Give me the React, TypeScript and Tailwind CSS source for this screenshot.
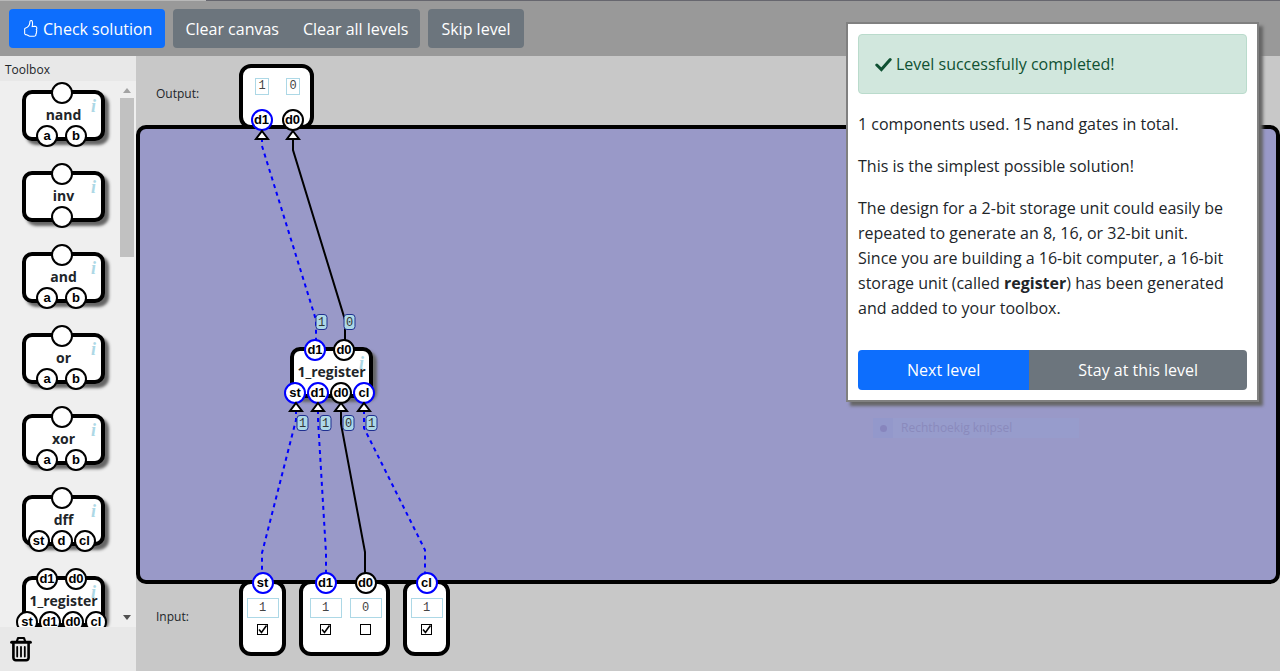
import { useState } from 'react';
import { BsHandThumbsUp } from 'react-icons/bs';

type PinProps = {
    label?: string;
    active?: boolean;
};

type GateProps = {
    name: string;
    outputs: PinProps[];
    inputs: PinProps[];
};

const toolbox: GateProps[] = [
    { name: 'nand', outputs: [{}], inputs: [{ label: 'a' }, { label: 'b' }] },
    { name: 'inv', outputs: [{}], inputs: [{}] },
    { name: 'and', outputs: [{}], inputs: [{ label: 'a' }, { label: 'b' }] },
    { name: 'or', outputs: [{}], inputs: [{ label: 'a' }, { label: 'b' }] },
    { name: 'xor', outputs: [{}], inputs: [{ label: 'a' }, { label: 'b' }] },
    { name: 'dff', outputs: [{}], inputs: [{ label: 'st' }, { label: 'd' }, { label: 'cl' }] },
    {
        name: '1_register',
        outputs: [{ label: 'd1' }, { label: 'd0' }],
        inputs: [{ label: 'st' }, { label: 'd1' }, { label: 'd0' }, { label: 'cl' }],
    },
];

const wires = [
    { points: '126,82 126,90 180,264 180,284', active: true },
    { points: '157,82 157,94 209,264 209,284', active: false },
    { points: '160,354 160,364 126,497 126,518', active: true },
    { points: '182,354 182,364 190,497 190,518', active: true },
    { points: '205,354 205,368 229,496 229,518', active: false },
    { points: '228,354 228,372 289,494 289,518', active: true },
];

const arrows = [
    { x: 126, y: 74 },
    { x: 157, y: 74 },
    { x: 160, y: 346 },
    { x: 182, y: 346 },
    { x: 205, y: 346 },
    { x: 228, y: 346 },
];

const tags = [
    { x: 185, y: 266, value: 1 },
    { x: 213, y: 266, value: 0 },
    { x: 166, y: 367, value: 1 },
    { x: 189, y: 367, value: 1 },
    { x: 212, y: 367, value: 0 },
    { x: 235, y: 367, value: 1 },
];

const TrashIcon = () => (
    <svg width="22" height="26" viewBox="0 0 22 26" fill="none" stroke="#000" strokeLinecap="round" strokeLinejoin="round">
        <path d="M7 5 8 2h6l1 3" strokeWidth="2.2" />
        <path d="M1.6 6.2h18.8" strokeWidth="3" />
        <path d="M3.4 7.5v14.3a2.4 2.4 0 0 0 2.4 2.4h10.4a2.4 2.4 0 0 0 2.4-2.4V7.5" strokeWidth="2.6" />
        <path d="M7.2 11v9.6M11 11v9.6M14.8 11v9.6" strokeWidth="1.8" />
    </svg>
);

const CheckIcon = () => (
    <svg width="17" height="16" viewBox="0 0 17 16" fill="none" stroke="currentColor" strokeLinecap="round">
        <path d="M1.8 8 6.4 12.6 15.2 2.6" strokeWidth="3" />
    </svg>
);

const Pin = ({ label, active = false }: PinProps) => (
    <span
        className={`flex size-[22px] shrink-0 items-center justify-center rounded-full border-2 bg-white font-['Liberation_Sans',sans-serif] text-[13px] font-bold text-black ${
            active ? 'border-[#0000ff]' : 'border-black'
        }`}
    >
        {label}
    </span>
);

const PinRow = ({ pins, className }: { pins: PinProps[]; className: string }) => (
    <div
        className={`absolute -right-3 -left-4 flex justify-center ${pins.length === 2 ? 'gap-[7px]' : 'gap-px'} ${className}`}
    >
        {pins.map((pin, i) => (
            <Pin key={i} {...pin} />
        ))}
    </div>
);

const Gate = ({ name, outputs, inputs }: GateProps) => (
    <div className="relative flex h-[51px] w-[83px] shrink-0 items-center justify-center rounded-[10px] border-4 border-black bg-white pb-0.5 shadow-[4px_4px_3px_#666]">
        <button
            type="button"
            aria-label={`About ${name}`}
            className="absolute top-0.5 right-[5px] font-['Liberation_Serif',serif] text-lg leading-5 font-bold text-[#add8e6] italic"
        >
            i
        </button>
        <span className="relative text-sm font-bold text-[#212529]">{name}</span>
        <PinRow pins={outputs} className="-top-3" />
        <PinRow pins={inputs} className="-bottom-2.5" />
    </div>
);

const Toolbox = () => (
    <aside className="flex w-[136px] shrink-0 flex-col bg-[#e8e8e8]">
        <h2 className="h-[25px] shrink-0 px-[5px] pt-1 text-xs leading-5">Toolbox</h2>
        <div className="flex min-h-0 flex-1 bg-[#efefef]">
            <div className="flex h-full w-[120px] flex-col gap-[30px] overflow-hidden pt-[9px] pl-[22px]">
                {toolbox.map((gate) => (
                    <Gate key={gate.name} {...gate} />
                ))}
            </div>
            <div className="flex w-3.5 flex-col items-center justify-between pt-[7px] pb-[7px]">
                <div className="flex w-full flex-col items-center gap-[5px]">
                    <svg width="8" height="5" viewBox="0 0 8 5">
                        <path d="M0 5 4 0l4 5z" fill="#a3a3a3" />
                    </svg>
                    <div className="h-[159px] w-full bg-[#c1c1c1]" />
                </div>
                <svg width="8" height="5" viewBox="0 0 8 5">
                    <path d="M0 0h8L4 5z" fill="#505050" />
                </svg>
            </div>
        </div>
        <div className="flex h-11 shrink-0 items-center pl-2.5">
            <button type="button" aria-label="Trash">
                <TrashIcon />
            </button>
        </div>
    </aside>
);

type BitProps = {
    label: string;
    checked: boolean;
    onToggle: () => void;
};

const Bit = ({ label, checked, onToggle }: BitProps) => (
    <div className="flex w-8 flex-col items-center gap-1">
        <div className="-mt-3">
            <Pin label={label} active={checked} />
        </div>
        <input
            type="text"
            readOnly
            aria-label={`${label} value`}
            value={checked ? 1 : 0}
            className="h-5 w-8 border border-[#add8e6] text-center font-['Liberation_Mono',monospace] text-xs text-[#444] outline-none"
        />
        <label className="relative mt-0.5 flex size-[11px]">
            <input
                type="checkbox"
                aria-label={`Toggle ${label}`}
                checked={checked}
                onChange={onToggle}
                className="size-[11px] appearance-none border border-black"
            />
            {checked && (
                <svg className="pointer-events-none absolute inset-0" width="11" height="11" viewBox="0 0 11 11">
                    <path d="M2 5.5 4.5 8.5 9.5 1.5" fill="none" stroke="#000" strokeWidth="1.6" />
                </svg>
            )}
        </label>
    </div>
);

const groups = [
    { names: ['st'], className: 'w-[47px]' },
    { names: ['d1', 'd0'], className: 'w-[91px] pl-0.5' },
    { names: ['cl'], className: 'w-[47px]' },
];

const Workspace = () => {
    const [bits, setBits] = useState<Record<string, boolean>>({ st: true, d1: true, d0: false, cl: true });

    return (
        <main className="relative flex min-w-0 flex-1 flex-col bg-[#c8c8c8]">
            <section className="flex h-[69px] shrink-0 pl-5">
                <h2 className="w-[83px] pt-7 text-xs leading-5">Output:</h2>
                <div className="relative z-10 mt-2 flex h-[65px] w-[75px] flex-col items-center justify-between rounded-xl border-4 border-black bg-white pt-2.5">
                    <div className="flex gap-[17px] pl-0.5 font-['Liberation_Mono',monospace] text-xs leading-[15px] text-[#444]">
                        <output className="w-3.5 border border-[#add8e6] text-center">1</output>
                        <output className="w-3.5 border border-[#add8e6] text-center">0</output>
                    </div>
                    <div className="-mb-1.5 flex gap-[9px] pl-px">
                        <Pin label="d1" active />
                        <Pin label="d0" />
                    </div>
                </div>
            </section>
            <section className="flex-1 rounded-[10px] border-4 border-black bg-[#9999c8]" />
            <section className="flex h-[87px] shrink-0 pl-5">
                <h2 className="w-[83px] pt-[23px] text-xs leading-5">Input:</h2>
                <div className="relative z-10 -mt-1 flex h-[76px] gap-[13px]">
                    {groups.map(({ names, className }) => (
                        <div
                            key={names[0]}
                            className={`flex justify-center gap-2 rounded-xl border-4 border-black bg-white ${className}`}
                        >
                            {names.map((name) => (
                                <Bit
                                    key={name}
                                    label={name}
                                    checked={bits[name]}
                                    onToggle={() => setBits({ ...bits, [name]: !bits[name] })}
                                />
                            ))}
                        </div>
                    ))}
                </div>
            </section>

            <svg className="pointer-events-none absolute inset-0 size-full">
                {wires.map(({ points, active }) => (
                    <polyline
                        key={points}
                        points={points}
                        fill="none"
                        stroke={active ? '#0000ff' : '#000'}
                        strokeWidth="2"
                        strokeDasharray={active ? '4 4' : undefined}
                    />
                ))}
            </svg>
            <div className="absolute top-[291px] left-[154px]">
                <Gate
                    name="1_register"
                    outputs={[{ label: 'd1', active: true }, { label: 'd0' }]}
                    inputs={[
                        { label: 'st', active: true },
                        { label: 'd1', active: true },
                        { label: 'd0' },
                        { label: 'cl', active: true },
                    ]}
                />
            </div>
            <svg className="pointer-events-none absolute inset-0 z-10 size-full">
                {arrows.map(({ x, y }) => (
                    <path
                        key={`${x}-${y}`}
                        d={`M${x} ${y + 1}l6 8h-12z`}
                        fill="#fff"
                        stroke="#000"
                        strokeWidth="2"
                    />
                ))}
                {tags.map(({ x, y, value }) => (
                    <g key={`${x}-${y}`}>
                        <rect x={x - 5} y={y - 7.5} width="11" height="15" rx="3" fill="#add8e6" stroke="#1f2f8f" />
                        <text
                            x={x + 0.5}
                            y={y + 4}
                            textAnchor="middle"
                            className="fill-[#333] font-['Liberation_Mono',monospace] text-xs"
                        >
                            {value}
                        </text>
                    </g>
                ))}
            </svg>
            <div className="absolute top-[362px] left-[737px] flex h-5 w-[206px] items-center bg-[#979ccc] text-xs text-[#8a8abc]">
                <span className="flex h-5 w-5 items-center justify-center bg-[#9398cb]">
                    <span className="size-[7px] rounded-full bg-[#8785bd]" />
                </span>
                <span className="pl-2">Rechthoekig knipsel</span>
            </div>
        </main>
    );
};

const LevelCompleted = () => (
    <div
        role="dialog"
        aria-label="Level completed"
        className="absolute top-[22px] right-[21px] z-20 w-[413px] border-2 border-[#808080] bg-white p-2.5 leading-[25px] shadow-[4px_4px_3px_#666]"
    >
        <div className="mb-[18px] flex items-center gap-1 rounded border border-[#badbcc] bg-[#d1e7dd] px-4 pt-[17px] pb-4 text-[#0f5132]">
            <CheckIcon />
            Level successfully completed!
        </div>
        <p className="mb-[17px]">1 components used. 15 nand gates in total.</p>
        <p className="mb-[17px]">This is the simplest possible solution!</p>
        <p className="pr-5">
            The design for a 2-bit storage unit could easily be repeated to generate an 8, 16, or 32-bit unit.
            <br />
            Since you are building a 16-bit computer, a 16-bit storage unit (called <strong>register</strong>) has been
            generated and added to your toolbox.
        </p>
        <div className="mt-[29px] flex h-10 text-white">
            <button type="button" className="flex-auto rounded-l bg-[#0d6efd] px-3">
                Next level
            </button>
            <button type="button" className="flex-auto rounded-r bg-[#6c757d] px-3">
                Stay at this level
            </button>
        </div>
    </div>
);

export default function App() {
    return (
        <div className="relative flex h-screen flex-col overflow-hidden font-['Open_Sans',sans-serif] text-base text-[#212529]">
            <div className="flex h-px shrink-0 bg-[#66666e]">
                <div className="w-[206px] bg-[#b8b8b8]" />
            </div>
            <header className="flex h-[55px] shrink-0 items-center gap-2 bg-[#999] px-[9px] text-white">
                <button type="button" className="flex h-[39px] items-center gap-1 rounded bg-[#0d6efd] px-[13px]">
                    <BsHandThumbsUp size={17} />
                    Check solution
                </button>
                <div className="flex h-[39px] rounded bg-[#6c757d]">
                    <button type="button" className="px-3">
                        Clear canvas
                    </button>
                    <button type="button" className="px-3">
                        Clear all levels
                    </button>
                </div>
                <button type="button" className="h-[39px] rounded bg-[#6c757d] px-[13px]">
                    Skip level
                </button>
            </header>
            <div className="flex min-h-0 flex-1">
                <Toolbox />
                <Workspace />
            </div>
            <LevelCompleted />
        </div>
    );
}
